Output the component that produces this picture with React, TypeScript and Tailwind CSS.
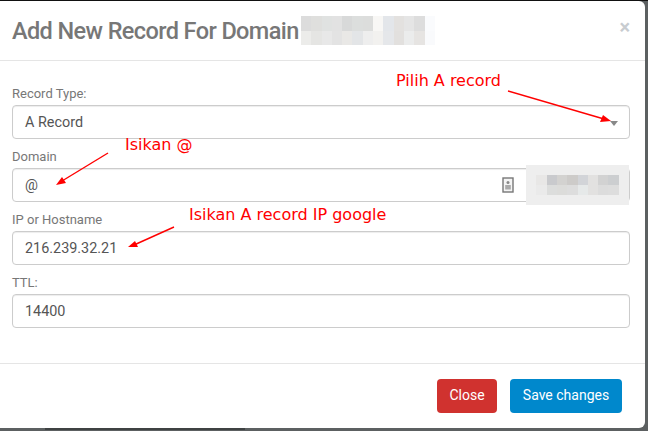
import React from "react";

const titleBlur = [
  ["#dcdcdc", "#dfdfdd", "#e0e2e1", "#e2e2e2", "#d8d9d9", "#dcdedd", "#dcdddc", "#f8f7f5", "#e3e6ea", "#e3e1df", "#e5e5e5", "#dddddd", "#fafbfd"],
  ["#ececea", "#e5e5e3", "#e8e8e8", "#e3e3e3", "#e9e8e6", "#e3e5e7", "#eeeeee", "#f2f1ef", "#e5e7ea", "#e2e0de", "#ebecec", "#e6e4e2", "#f9fafc"],
];

const domainBlur = [
  ["#e8e7e6", "#c9cacd", "#d3d2d0", "#cdcbc9", "#d2d4d8", "#e2e1e0", "#d2d2d2", "#ccced0"],
  ["#eaeaea", "#dcdddc", "#dcdcda", "#dddddd", "#e6e9e9", "#e2e1e0", "#dcdcdc", "#dddddd"],
];

function Mosaic({ rows, cell }: { rows: string[][]; cell: string }) {
  return (
    <div className="flex flex-col">
      {rows.map((row, i) => (
        <div key={i} className="flex">
          {row.map((c, j) => (
            <div key={j} className={cell} style={{ backgroundColor: c }} />
          ))}
        </div>
      ))}
    </div>
  );
}

function Field({ label, children }: { label: string; children: React.ReactNode }) {
  return (
    <div className="h-[63px] flex flex-col justify-end">
      <label className="block h-[19px] text-[13px] leading-[16px] text-[#777]">{label}</label>
      <div className="h-[34px] mb-[10px] relative flex items-center px-3 pt-px bg-white border border-[#ccc] rounded-[4px] text-[14.4px] text-[#555] shadow-[inset_0_1px_1px_rgba(0,0,0,0.075)]">
        {children}
      </div>
    </div>
  );
}

export default function App() {
  return (
    <div className="w-[650px] h-[431px] bg-white overflow-hidden font-['Roboto',sans-serif]">
      <div className="w-[648px] h-[431px] bg-[#5c6061] flex flex-col">
        <div className="h-px bg-[#111] shrink-0" />
        <div className="relative w-[645px] h-[427px] bg-white rounded-r-[6px] flex flex-col shrink-0">
          {/* Header */}
          <div className="h-[60px] border-b border-[#e5e5e5] flex items-center pl-3 pr-[15px] shrink-0">
            <h4 className="w-[286px] text-[23.5px] font-medium leading-[30px] tracking-[-0.6px] text-[#777] whitespace-nowrap">Add New Record For Domain</h4>
            <div className="ml-[3px]">
              <Mosaic rows={titleBlur} cell="w-[10.3px] h-[14.5px]" />
            </div>
            <span className="ml-auto -mt-2 text-[20px] font-bold text-[#c8ccd0] leading-none">×</span>
          </div>

          {/* Form */}
          <div className="h-[302px] pt-[25px] px-3 shrink-0">
            <div className="w-[618px]">
              <Field label="Record Type:">
                <span>A Record</span>
                <span className="absolute right-[11px] top-[15px] w-0 h-0 border-x-[4px] border-x-transparent border-t-[5px] border-t-[#888]" />
              </Field>
              <Field label="Domain">
                <span>@</span>
                <svg className="absolute left-[489px] top-[8px]" width="12" height="16" viewBox="0 0 12 16">
                  <rect x="1" y="1" width="10" height="14" fill="#f4f4f4" stroke="#777" strokeWidth="1.4" />
                  <circle cx="6" cy="5.5" r="1.5" fill="#888" />
                  <rect x="3.2" y="8" width="5.6" height="4.5" fill="#aaa" />
                </svg>
              </Field>
              <Field label="IP or Hostname">
                <span>216.239.32.21</span>
              </Field>
              <Field label="TTL:">
                <span>14400</span>
              </Field>
            </div>
          </div>

          {/* Footer */}
          <div className="flex-1 border-t border-[#e5e5e5] flex justify-end items-start pt-[15px] pr-[23px] gap-[13px]">
            <button className="w-[60px] h-[34px] pb-[2px] rounded-[4px] bg-[#d0322f] text-white text-[14px]">Close</button>
            <button className="w-[112px] h-[34px] pb-[2px] rounded-[4px] bg-[#0088cc] text-white text-[14px]">Save changes</button>
          </div>

          {/* Blurred domain suffix pasted over the input */}
          <div className="absolute left-[526px] top-[164px] w-[103px] h-[40px] bg-[#eeeeee] flex items-center justify-center">
            <Mosaic rows={domainBlur} cell="w-[10.3px] h-[10px]" />
          </div>

          {/* Annotations */}
          <svg className="absolute left-0 top-[-1px] pointer-events-none" width="645" height="431" viewBox="0 0 645 431" fill="none">
            <path d="M508 91L604 119" stroke="#f00" strokeWidth="1.4" />
            <path d="M611 121L600 122L603 115Z" fill="#f00" />
            <path d="M108 153L62 181" stroke="#f00" strokeWidth="1.4" />
            <path d="M56 185L62 177L66 183Z" fill="#f00" />
            <path d="M174 227L134 245" stroke="#f00" strokeWidth="1.4" />
            <path d="M128 247L135 241L138 247Z" fill="#f00" />
          </svg>
          <span className="absolute left-[396px] top-[70px] font-['DejaVu_Sans',sans-serif] text-[16px] leading-[20px] text-[#f00] whitespace-nowrap">Pilih A record</span>
          <span className="absolute left-[125px] top-[134px] font-['DejaVu_Sans',sans-serif] text-[16px] leading-[20px] text-[#f00] whitespace-nowrap">Isikan @</span>
          <span className="absolute left-[189px] top-[204px] font-['DejaVu_Sans',sans-serif] text-[16px] leading-[20px] text-[#f00] whitespace-nowrap">Isikan A record IP google</span>
        </div>
        <div className="ml-[45px] w-[200px] h-[2px] bg-[#3f4243]" />
      </div>
    </div>
  );
}
